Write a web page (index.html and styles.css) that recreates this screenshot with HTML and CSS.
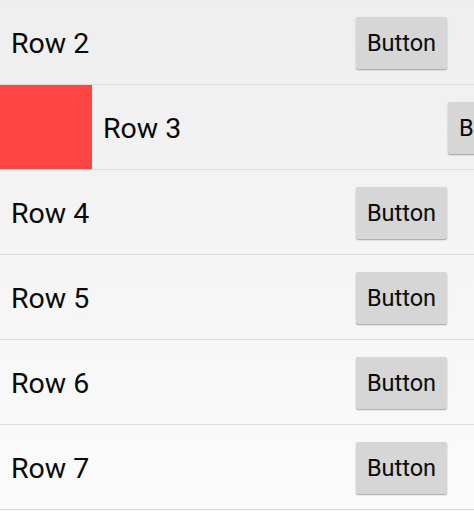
FILE: index.html
```html
<!DOCTYPE html>
<html>
<head>
<meta charset="utf-8">
<link rel="stylesheet" href="styles.css">
</head>
<body>
<div class="list">
  <div class="row">
    <div class="content"><span class="label">Row 2</span><button class="btn">Button</button></div>
  </div>
  <div class="row swiped">
    <div class="reveal"></div>
    <div class="content"><span class="label">Row 3</span><button class="btn">Button</button></div>
  </div>
  <div class="row">
    <div class="content"><span class="label">Row 4</span><button class="btn">Button</button></div>
  </div>
  <div class="row">
    <div class="content"><span class="label">Row 5</span><button class="btn">Button</button></div>
  </div>
  <div class="row">
    <div class="content"><span class="label">Row 6</span><button class="btn">Button</button></div>
  </div>
  <div class="row">
    <div class="content"><span class="label">Row 7</span><button class="btn">Button</button></div>
  </div>
</div>
</body>
</html>
```
FILE: styles.css
```css
html, body {
  margin: 0;
  padding: 0;
}
body {
  width: 474px;
  height: 511px;
  overflow: hidden;
  background: linear-gradient(to bottom, #eeeeee 0%, #fbfbfb 100%);
  font-family: Roboto, "Noto Sans", sans-serif;
  color: #0a0a0a;
}
.list {
  display: flex;
  flex-direction: column;
}
.row {
  display: flex;
  height: 84px;
  border-bottom: 1px solid #dcdcdc;
  overflow: hidden;
}
.reveal {
  flex: 0 0 92px;
  background: #ff4444;
}
.content {
  flex: 0 0 474px;
  display: flex;
  align-items: center;
  justify-content: space-between;
  padding: 0 27px 0 11px;
  box-sizing: border-box;
}
.label {
  font-size: 28.5px;
  line-height: 1;
  padding-top: 4px;
}
.btn {
  width: 91px;
  height: 52px;
  border: none;
  border-radius: 2px;
  background: #d6d6d6;
  box-shadow: 0 1px 1.5px rgba(0,0,0,0.35);
  font-family: Roboto, "Noto Sans", sans-serif;
  font-size: 23.5px;
  color: #0a0a0a;
  padding: 0;
  margin-top: 2px;
}
```
